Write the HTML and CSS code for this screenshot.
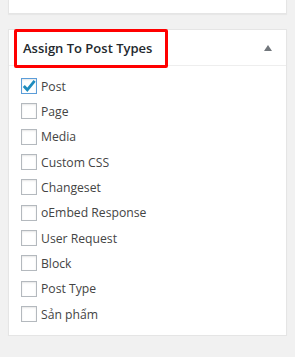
FILE: index.html
```html
<!DOCTYPE html>
<html lang="en">
<head>
  <meta charset="UTF-8" />
  <title>Assign To Post Types</title>
  <link rel="stylesheet" href="styles.css">
</head>
<body>

  <div class="postbox postbox-prev"></div>

  <div class="postbox">
    <div class="postbox-header">
      <h2 class="hndle"><span>Assign To Post Types</span></h2>
      <span class="toggle-arrow"></span>
    </div>
    <div class="inside">
      <label class="type-row"><span class="box checked"><svg viewBox="0 0 16 16" width="16" height="16"><path d="M2.8 8 L6.3 11.8 L13.6 2.8" fill="none" stroke="#1e8cbe" stroke-width="2.8"/></svg></span>Post</label>
      <label class="type-row"><span class="box"></span>Page</label>
      <label class="type-row"><span class="box"></span>Media</label>
      <label class="type-row"><span class="box"></span>Custom CSS</label>
      <label class="type-row"><span class="box"></span>Changeset</label>
      <label class="type-row"><span class="box"></span>oEmbed Response</label>
      <label class="type-row"><span class="box"></span>User Request</label>
      <label class="type-row"><span class="box"></span>Block</label>
      <label class="type-row"><span class="box"></span>Post Type</label>
      <label class="type-row"><span class="box"></span>Sản phẩm</label>
    </div>
  </div>

</body>
</html>
```

FILE: styles.css
```css
body {
  margin: 0;
  background: #f1f1f1;
  font-family: "Open Sans", "Noto Sans", sans-serif;
  color: #444;
}

.postbox {
  margin: 0 8px;
  background: #fff;
  border: 1px solid #e5e5e5;
  box-shadow: 0 1px 1px rgba(0, 0, 0, 0.04);
}

.postbox-prev {
  height: 13px;
  border-top: none;
  margin-bottom: 15px;
}

.postbox-header {
  display: flex;
  align-items: center;
  justify-content: space-between;
  height: 35px;
  border-bottom: 1px solid #eee;
}

.hndle {
  margin: 0;
  padding-left: 5px;
  font-size: 13px;
  font-weight: 600;
  line-height: 1;
  color: #23282d;
}

.hndle span {
  display: inline-block;
  padding: 10px 13px 10px 6px;
  border: 3px solid #f00;
  border-radius: 2px;
  margin-top: 1px;
}

.toggle-arrow {
  width: 0;
  height: 0;
  margin-right: 14px;
  border-left: 4px solid transparent;
  border-right: 4px solid transparent;
  border-bottom: 6px solid #72777c;
}

.inside {
  padding: 12px 12px 13px;
}

.type-row {
  display: flex;
  align-items: center;
  height: 16px;
  margin-bottom: 9.35px;
  font-size: 12.2px;
  color: #444;
}

.type-row:last-child {
  margin-bottom: 0;
}

.box {
  box-sizing: border-box;
  width: 16px;
  height: 16px;
  margin-right: 4px;
  border: 1px solid #b4b9be;
  background: #fff;
  box-shadow: inset 0 1px 2px rgba(0, 0, 0, 0.1);
  flex-shrink: 0;
}

.box.checked {
  border-color: #5b9dd9;
}

.box svg {
  display: block;
  margin: -1px;
}
```
